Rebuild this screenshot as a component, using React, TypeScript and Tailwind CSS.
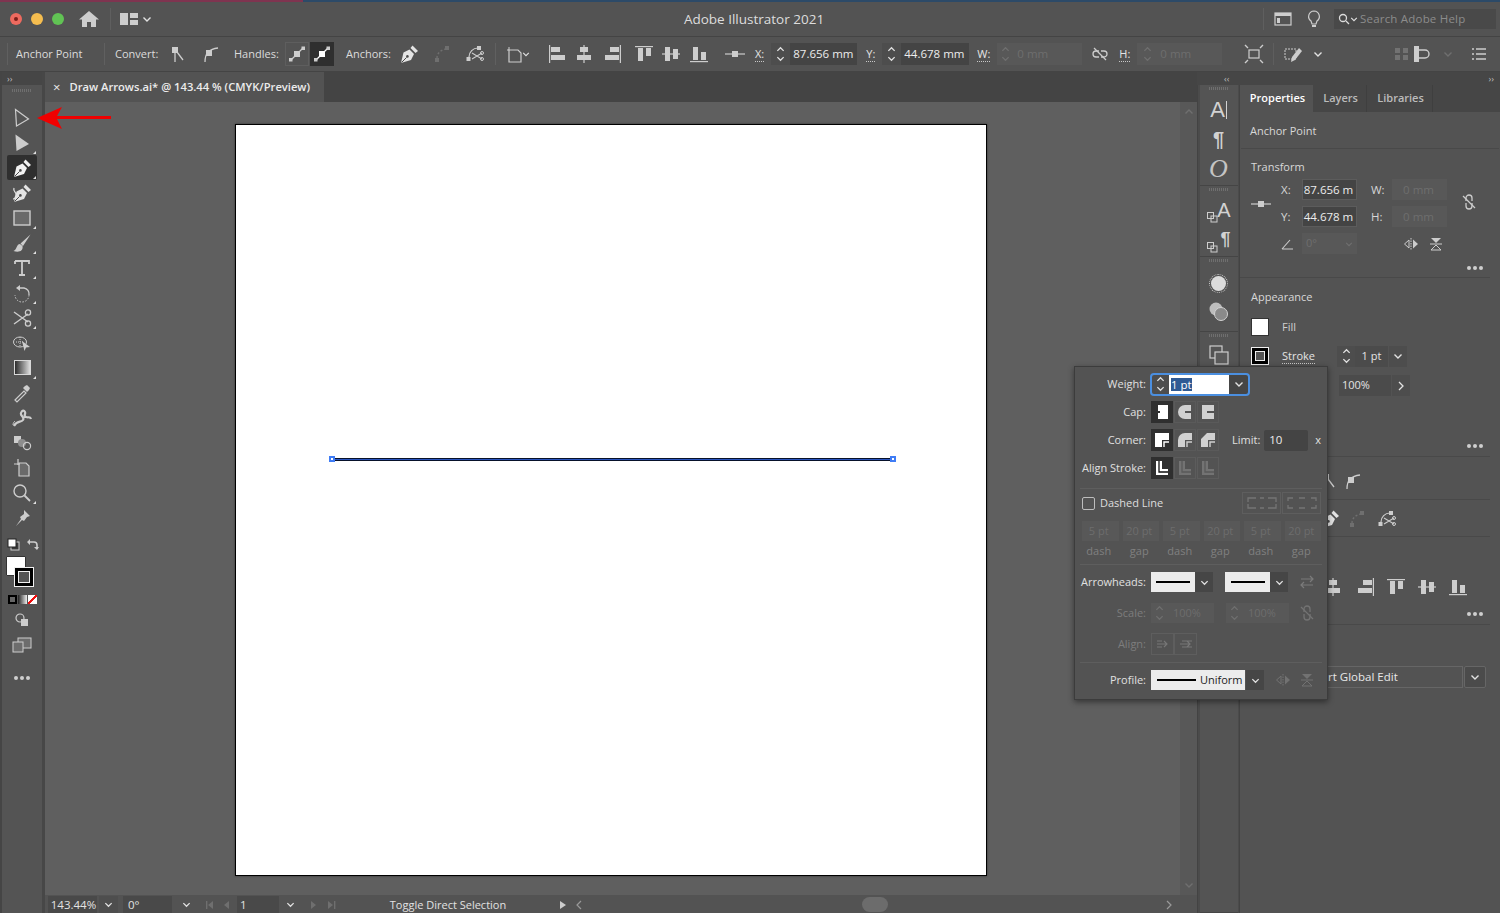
import type { ReactNode } from "react";

const FONT = { fontFamily: '"Open Sans", "Noto Sans", sans-serif' };

function Ico({ w = 20, h = 20, className = "", children }: { w?: number; h?: number; className?: string; children: ReactNode }) {
  return (
    <svg width={w} height={h} viewBox={`0 0 ${w} ${h}`} className={`shrink-0 ${className}`} fill="none">
      {children}
    </svg>
  );
}

const C = "#cdcdcd";

function Chevron({ dim = false, up = false, size = 10 }: { dim?: boolean; up?: boolean; size?: number }) {
  return (
    <svg width={size} height={size} viewBox="0 0 10 10" className="shrink-0" fill="none">
      <path d={up ? "M1.5 6.5 5 3l3.5 3.5" : "M1.5 3.5 5 7l3.5-3.5"} stroke={dim ? "#6f6f6f" : "#e2e2e2"} strokeWidth="1.4" />
    </svg>
  );
}

function Stepper({ dim = false, className = "w-[19px]" }: { dim?: boolean; className?: string }) {
  return (
    <div className={`flex h-full flex-col items-center justify-center bg-[#4d4d4d] ${className}`}>
      <Chevron up dim={dim} size={9} />
      <Chevron dim={dim} size={9} />
    </div>
  );
}

function Dots({ className = "" }: { className?: string }) {
  return (
    <div className={`flex gap-[2px] ${className}`}>
      <span className="h-[4px] w-[4px] rounded-full bg-[#cfcfcf]" />
      <span className="h-[4px] w-[4px] rounded-full bg-[#cfcfcf]" />
      <span className="h-[4px] w-[4px] rounded-full bg-[#cfcfcf]" />
    </div>
  );
}

function Under({ children, className = "" }: { children: ReactNode; className?: string }) {
  return <span className={`border-b border-dotted border-[#c8c8c8] leading-[12px] text-[#e4e4e4] ${className}`}>{children}</span>;
}

/* ---------- align icons ---------- */
function AlignIcon({ kind }: { kind: number }) {
  const f = C;
  const shapes = [
    <g key="0" fill={f}><rect x="1" y="1" width="1.2" height="18" /><rect x="3" y="3" width="9" height="5" /><rect x="3" y="11" width="14" height="5" /></g>,
    <g key="1" fill={f}><rect x="9.4" y="1" width="1.2" height="18" /><rect x="6" y="3" width="8" height="5" /><rect x="3" y="11" width="14" height="5" /></g>,
    <g key="2" fill={f}><rect x="17.8" y="1" width="1.2" height="18" /><rect x="8" y="3" width="9" height="5" /><rect x="3" y="11" width="14" height="5" /></g>,
    <g key="3" fill={f}><rect x="1" y="2" width="18" height="1.2" /><rect x="4" y="4" width="5" height="13" /><rect x="12" y="4" width="5" height="8" /></g>,
    <g key="4" fill={f}><rect x="1" y="9.4" width="18" height="1.2" /><rect x="4" y="3" width="5" height="14" /><rect x="12" y="5" width="5" height="10" /></g>,
    <g key="5" fill={f}><rect x="1" y="17" width="18" height="1.2" /><rect x="4" y="3" width="5" height="13" /><rect x="12" y="8" width="5" height="8" /></g>,
  ];
  return <Ico>{shapes[kind]}</Ico>;
}

function ConvertCorner() {
  return (
    <Ico>
      <rect x="3" y="3" width="6" height="6" fill={C} />
      <path d="M6 9v9M8 8l6 8" stroke={C} strokeWidth="1.3" />
    </Ico>
  );
}

function ConvertSmooth() {
  return (
    <Ico>
      <rect x="5" y="6" width="6" height="6" fill={C} />
      <path d="M4 18c0-8 3-13 13-14" stroke={C} strokeWidth="1.3" />
    </Ico>
  );
}

function HandleIcon({ active = false }: { active?: boolean }) {
  const c = active ? "#fff" : C;
  return (
    <Ico w={18} h={18}>
      <path d="M3 15 15 3" stroke={c} strokeWidth="1.2" />
      <rect x="1" y="13" width="3.5" height="3.5" fill={C} />
      <rect x="13.5" y="1.5" width="3.5" height="3.5" fill={C} />
      <rect x="6" y="6" width="6" height="6" fill={c} />
    </Ico>
  );
}

function PenIcon({ curl = false, fill = "#e4e4e4" }: { curl?: boolean; fill?: string }) {
  return (
    <Ico>
      <path d="M2 19 4.5 8.5 10.5 5.5 15 10l-3 6z" fill={fill} />
      <path d="M11.5 4 13.5 1.5 19 7l-2.5 2z" fill={fill} />
      <path d="m2.5 18.5 5-5" stroke="#4a4a4a" strokeWidth="1" />
      <circle cx="8.4" cy="12.4" r="1.3" fill="#4a4a4a" />
      {curl && <path d="M2 5c-1.5 4 3 3.5 2 7.5-.5 2-2 3.5-3 3.5" stroke={fill} strokeWidth="1.2" />}
    </Ico>
  );
}

function RemoveAnchor() {
  return (
    <Ico>
      <path d="M5 14c0-4 3-8 9-9" stroke="#6f6f6f" strokeWidth="1.4" strokeDasharray="2 2" />
      <rect x="3" y="14" width="4" height="4" fill="#6f6f6f" />
      <rect x="13" y="2" width="4" height="4" fill="#6f6f6f" />
    </Ico>
  );
}

function CutAnchor() {
  return (
    <Ico>
      <path d="M4 13c0-5 4-9 9-9" stroke={C} strokeWidth="1.2" />
      <rect x="1.5" y="13" width="4" height="4" fill={C} />
      <rect x="12" y="2" width="4" height="4" fill={C} />
      <path d="m7 9 10 6M7 15l10-6" stroke={C} strokeWidth="1.1" />
      <circle cx="17" cy="9" r="1.5" stroke={C} />
      <circle cx="17" cy="15" r="1.5" stroke={C} />
    </Ico>
  );
}

function UnlinkIcon({ dim = false, flat = false }: { dim?: boolean; flat?: boolean }) {
  const c = dim ? "#737373" : C;
  return (
    <Ico w={18} h={18} className={flat ? "rotate-90 -scale-x-100" : ""}>
      <path d="M6 8V5a3 3 0 0 1 6 0v3M6 10v3a3 3 0 0 0 6 0v-3" stroke={c} strokeWidth="1.3" />
      <path d="M3 3l12 12" stroke={c} strokeWidth="1.3" />
    </Ico>
  );
}

function FlipH({ dim = false }: { dim?: boolean }) {
  const c = dim ? "#727272" : C;
  return (
    <Ico w={16} h={16}>
      <path d="M6 4 1.5 8 6 12z" stroke={c} />
      <path d="M10 3.500 15 8l-5 4.500z" fill={c} />
      <path d="M8 2v12" stroke={c} strokeDasharray="1.5 1" />
    </Ico>
  );
}

function FlipV({ dim = false }: { dim?: boolean }) {
  const c = dim ? "#727272" : C;
  return (
    <Ico w={16} h={16}>
      <path d="M3 2h10L8 7z" fill={c} />
      <path d="M3 14h10L8 9z" stroke={c} />
      <path d="M2 8h12" stroke={c} />
    </Ico>
  );
}

function Anchor3() {
  return (
    <Ico w={20} h={10}>
      <path d="M0 5h20" stroke={C} strokeWidth="1.2" />
      <rect x="7" y="2" width="6" height="6" fill={C} />
    </Ico>
  );
}

/* ---------- title bar ---------- */
function TitleBar() {
  return (
    <div>
      <div className="h-[2px] bg-[linear-gradient(90deg,#7f3450_303px,#2c4a68_303px)]" />
      <div className="flex h-[34px] items-center bg-[#535353]">
        <span className="ml-[10px] flex h-[12px] w-[12px] items-center justify-center rounded-full bg-[#ee6a5f]">
          <span className="h-[4px] w-[4px] rounded-full bg-[#7a1f1a]" />
        </span>
        <span className="ml-[9px] h-[12px] w-[12px] rounded-full bg-[#f5bd4f]" />
        <span className="ml-[9px] h-[12px] w-[12px] rounded-full bg-[#61c354]" />
        <Ico w={20} h={18} className="ml-[15px]">
          <path d="M10 1 0 9.5h3V17h5v-5h4v5h5V9.5h3z" fill={C} />
        </Ico>
        <span className="ml-[11px] h-[22px] w-px bg-[#5f5f5f]" />
        <Ico w={18} h={14} className="ml-[9px]">
          <rect x="0" y="1" width="8" height="12" fill={C} />
          <rect x="10" y="1" width="8" height="5" fill={C} />
          <rect x="10" y="8" width="8" height="5" fill={C} />
        </Ico>
        <span className="ml-[4px]"><Chevron /></span>
        <div className="ml-[502px] w-[200px] text-center text-[13.5px] text-[#dddddd]">Adobe Illustrator 2021</div>
        <span className="ml-[409px] h-[22px] w-px bg-[#5f5f5f]" />
        <Ico w={18} h={14} className="ml-[10px]">
          <rect x="1" y="1" width="16" height="12" stroke={C} strokeWidth="1.2" />
          <rect x="1" y="1" width="16" height="3" fill={C} />
          <rect x="3" y="6" width="3" height="5" fill={C} />
        </Ico>
        <Ico w={14} h={18} className="ml-[15px]">
          <path d="M7 1a5.5 5.5 0 0 0-3 10l1 3h4l1-3A5.5 5.5 0 0 0 7 1z" stroke={C} strokeWidth="1.2" />
          <rect x="5" y="15" width="4" height="2" fill={C} />
        </Ico>
        <div className="ml-[13px] flex h-[20px] w-[162px] items-center bg-[#494949] pl-[4px]">
          <Ico w={12} h={12}>
            <circle cx="5" cy="5" r="3.5" stroke="#dcdcdc" strokeWidth="1.3" />
            <path d="m8 8 3 3" stroke="#dcdcdc" strokeWidth="1.3" />
          </Ico>
          <Chevron size={8} />
          <span className="ml-[2px] text-[11.5px] tracking-[0.2px] text-[#8c8c8c]">Search Adobe Help</span>
        </div>
      </div>
    </div>
  );
}

/* ---------- control bar ---------- */
function Field({ value, dim = false, w, stepW = "w-[19px]" }: { value: string; dim?: boolean; w: string; stepW?: string }) {
  return (
    <div className="flex h-[22px] items-center">
      <Stepper dim={dim} className={dim ? `${stepW} !bg-[#585858]` : stepW} />
      <div className={`flex h-full items-center pl-[3px] text-[11.5px] ${w} ${dim ? "bg-[#585858] text-[#6e6e6e]" : "bg-[#444444] text-[#ececec]"}`}>
        {value}
      </div>
    </div>
  );
}

function ControlBar() {
  return (
    <div className="flex h-[36px] items-center border-y border-[#444444] bg-[#535353] text-[11px] text-[#dcdcdc]">
      <span className="ml-[7px] h-[22px] w-px bg-[#606060]" />
      <span className="ml-[8px] w-[66px] whitespace-nowrap">Anchor Point</span>
      <span className="ml-[22px] h-[22px] w-px bg-[#606060]" />
      <span className="ml-[10px] w-[44px]">Convert:</span>
      <span className="ml-[10px]"><ConvertCorner /></span>
      <span className="ml-[12px]"><ConvertSmooth /></span>
      <span className="ml-[13px] w-[44px]">Handles:</span>
      <div className="ml-[7px] flex h-[24px] w-[24px] items-center justify-center border border-[#5e5e5e]"><HandleIcon /></div>
      <div className="ml-px flex h-[24px] w-[24px] items-center justify-center bg-[#2f2f2f]"><HandleIcon active /></div>
      <span className="ml-[12px] w-[45px]">Anchors:</span>
      <span className="ml-[8px]"><PenIcon /></span>
      <span className="ml-[13px]"><RemoveAnchor /></span>
      <span className="ml-[13px]"><CutAnchor /></span>
      <span className="ml-[10px] h-[22px] w-px bg-[#606060]" />
      <Ico w={16} h={18} className="ml-[10px]">
        <path d="M3 5h9l3 3v9H3z" stroke={C} strokeWidth="1.2" />
        <path d="M1 5h2M3 2v3" stroke={C} />
      </Ico>
      <Chevron size={8} />
      <span className="ml-[18px]"><AlignIcon kind={0} /></span>
      <span className="ml-[6px]"><AlignIcon kind={1} /></span>
      <span className="ml-[8px]"><AlignIcon kind={2} /></span>
      <span className="ml-[12px]"><AlignIcon kind={3} /></span>
      <span className="ml-[7px]"><AlignIcon kind={4} /></span>
      <span className="ml-[8px]"><AlignIcon kind={5} /></span>
      <span className="ml-[16px]"><Anchor3 /></span>
      <span className="ml-[10px]"><Under>X:</Under></span>
      <span className="ml-[7px]"><Field value="87.656 mm" w="w-[67px]" /></span>
      <span className="ml-[9px]"><Under>Y:</Under></span>
      <span className="ml-[7px]"><Field value="44.678 mm" w="w-[68px]" /></span>
      <span className="ml-[8px]"><Under>W:</Under></span>
      <span className="ml-[7px]"><Field value="0 mm" dim w="w-[68px]" stepW="w-[17px]" /></span>
      <span className="ml-[9px]"><UnlinkIcon flat /></span>
      <span className="ml-[10px]"><Under>H:</Under></span>
      <span className="ml-[7px]"><Field value="0 mm" dim w="w-[65px]" stepW="w-[20px]" /></span>
      <Ico w={20} h={20} className="ml-[22px]">
        <rect x="5" y="6" width="10" height="8" stroke={C} strokeWidth="1.2" />
        <path d="M1 1l3 3M19 1l-3 3M1 19l3-3M19 19l-3-3" stroke={C} strokeWidth="1.4" />
      </Ico>
      <span className="ml-[9px] h-[22px] w-px bg-[#5e5e5e]" />
      <Ico w={20} h={20} className="ml-[10px]">
        <rect x="1" y="5" width="11" height="10" stroke={C} strokeDasharray="2 1" />
        <path d="m7 18 1-5 7-9 3 3-7 9z" fill={C} />
      </Ico>
      <span className="ml-[9px]"><Chevron /></span>
      <Ico w={16} h={14} className="ml-[71px]">
        <rect x="1" y="1" width="5" height="5" fill="#727272" />
        <rect x="9" y="1" width="5" height="5" fill="#727272" />
        <rect x="1" y="8" width="5" height="5" fill="#727272" />
        <rect x="9" y="8" width="5" height="5" fill="#727272" />
      </Ico>
      <Ico w={16} h={20} className="ml-[4px]">
        <rect x="0" y="2" width="5" height="16" fill={C} />
        <path d="M5 6h6a4 4 0 0 1 0 8H5" stroke={C} strokeWidth="1.4" />
      </Ico>
      <span className="ml-[13px]"><Chevron dim /></span>
      <Ico w={14} h={14} className="ml-[19px]">
        <path d="M0 2h2M4 2h10M0 7h2M4 7h10M0 12h2M4 12h10" stroke={C} strokeWidth="1.4" />
      </Ico>
    </div>
  );
}

/* ---------- tools ---------- */
function Tool({ children, corner = true, active = false }: { children: ReactNode; corner?: boolean; active?: boolean }) {
  return (
    <div className={`relative flex h-[25px] w-[30px] items-center justify-center ${active ? "rounded-[2px] bg-[#2f2f2f]" : ""}`}>
      {children}
      {corner && <span className="absolute bottom-[1px] right-[1px] h-0 w-0 border-b-[3px] border-l-[3px] border-b-[#e0e0e0] border-l-transparent" />}
    </div>
  );
}

function Grip({ className = "" }: { className?: string }) {
  return <div className={`h-[3px] w-[20px] bg-[repeating-linear-gradient(90deg,#6f6f6f_0,#6f6f6f_1px,transparent_1px,transparent_2px)] ${className}`} />;
}

function ToolBar() {
  return (
    <div className="flex w-[42px] shrink-0 flex-col items-center border-l-2 border-[#454545] bg-[#545454]">
      <div className="flex h-[13px] w-full items-center bg-[#464646] pl-[5px] text-[9px] leading-none text-[#bdbdbd]">››</div>
      <Grip className="mt-[4px]" />
      <div className="mt-[13px] flex flex-col items-center">
        <Tool corner={false}>
          <Ico><path d="M3.5 1.500 4.500 18 16.500 11z" stroke={C} strokeWidth="1.2" /></Ico>
        </Tool>
        <Tool>
          <Ico><path d="M3.5 1.500 4.500 18 17 11z" fill={C} /></Ico>
        </Tool>
        <Tool active><PenIcon fill="#f2f2f2" /></Tool>
        <Tool corner={false}><PenIcon curl /></Tool>
        <Tool>
          <Ico><rect x="2" y="3" width="16" height="14" fill="#6a6a6a" stroke={C} strokeWidth="1.4" /></Ico>
        </Tool>
        <Tool>
          <Ico><path d="M18.5 1.500 8.500 10.500l2.500 2.500zM8 11c-4 .5-2.500 5-6.500 7 5 1.500 10 .5 9-5z" fill={C} /></Ico>
        </Tool>
        <Tool>
          <Ico><path d="M3 3h14v3M3 3v3M10 3v14M7 17h6" stroke={C} strokeWidth="1.8" /></Ico>
        </Tool>
        <Tool>
          <Ico>
            <path d="M6 5h6a6 6 0 0 1 5 7" stroke={C} strokeWidth="1.3" />
            <path d="M17 12a7 7 0 0 1-14 0" stroke={C} strokeDasharray="1.5 1.5" />
            <path d="M8 2 4 5l4 3z" fill={C} />
          </Ico>
        </Tool>
        <Tool>
          <Ico>
            <path d="m2 4 14 10M2 16 16 6" stroke={C} strokeWidth="1.4" />
            <circle cx="16" cy="4.5" r="2.6" stroke={C} strokeWidth="1.3" />
            <circle cx="16" cy="15.5" r="2.6" stroke={C} strokeWidth="1.3" />
          </Ico>
        </Tool>
        <Tool corner={false}>
          <Ico>
            <ellipse cx="8" cy="9" rx="6.5" ry="5" stroke={C} />
            <path d="M4 9h8M8 4v10" stroke={C} strokeDasharray="1 1" />
            <path d="m10 8 8 6-4 .5-1.5 3.5z" fill={C} />
          </Ico>
        </Tool>
        <Tool>
          <div className="h-[15px] w-[17px] border border-[#d8d8d8] bg-[linear-gradient(90deg,#2c2c2c,#dedede)]" />
        </Tool>
        <Tool corner={false}>
          <Ico>
            <path d="m3 17 9-9 2 2-9 9z" stroke={C} strokeWidth="1.2" />
            <path d="m11 5 2-2 2-1 3 3-1 2-2 2z" fill={C} />
          </Ico>
        </Tool>
        <Tool corner={false}>
          <Ico>
            <path d="M2 18c3-6 7-3 9-6s-3-4-2-7 3-3 4-1-2 4 1 5 4-1 5 2" stroke={C} strokeWidth="2.2" />
            <path d="M1 17c0-2 1-3 2-4" stroke={C} />
          </Ico>
        </Tool>
        <Tool corner={false}>
          <Ico>
            <rect x="2" y="3" width="7" height="7" fill={C} />
            <circle cx="10" cy="10" r="4" fill="#8d8d8d" />
            <circle cx="15" cy="13" r="3.6" stroke={C} strokeWidth="1.2" />
          </Ico>
        </Tool>
        <Tool corner={false}>
          <Ico>
            <path d="M7 5h7l3 3v10H7z" fill="#6a6a6a" stroke={C} strokeWidth="1.2" />
            <path d="M2 6h6M6 1v6" stroke={C} strokeWidth="1.2" />
          </Ico>
        </Tool>
        <Tool>
          <Ico>
            <circle cx="8" cy="8" r="6" stroke={C} strokeWidth="1.4" />
            <path d="m12.5 12.5 5.5 5.5" stroke={C} strokeWidth="1.8" />
          </Ico>
        </Tool>
        <Tool corner={false}>
          <Ico><path d="m12 2 6 6-3 1-3 4-2-1-6 6 5-7-1-2 4-3z" fill={C} /></Ico>
        </Tool>
      </div>
      <div className="mt-[7px] flex h-[14px] w-[34px] items-center justify-between pl-[2px]">
        <Ico w={13} h={13}>
          <rect x="4" y="4" width="8" height="8" fill="#3a3a3a" stroke={C} />
          <rect x="1" y="1" width="8" height="8" fill="#fff" stroke="#222" />
        </Ico>
        <Ico w={13} h={13}>
          <path d="M2 4h6a3 3 0 0 1 3 3v4" stroke={C} strokeWidth="1.6" />
          <path d="M4 1 1 4l3 3zM8 9l3 3 2-3z" fill={C} />
        </Ico>
      </div>
      <div className="relative mt-[5px] h-[31px] w-[32px]">
        <div className="h-[20px] w-[20px] rounded-[1px] border border-[#333] bg-white" />
        <div className="absolute bottom-0 right-[4px] flex h-[20px] w-[20px] items-center justify-center border border-[#f0f0f0] bg-black">
          <div className="flex h-[12px] w-[12px] items-center justify-center border border-[#f0f0f0] bg-[#555]" />
        </div>
      </div>
      <div className="mt-[7px] flex h-[10px] items-center gap-px">
        <div className="flex h-[9px] w-[9px] items-center justify-center bg-black"><div className="h-[5px] w-[5px] bg-[#666]" /></div>
        <div className="h-[9px] w-[9px] bg-[linear-gradient(90deg,#222,#eee)]" />
        <div className="h-[9px] w-[9px] bg-[linear-gradient(135deg,#fff_40%,#f01010_40%,#f01010_60%,#fff_60%)]" />
      </div>
      <Ico w={14} h={14} className="mt-[9px]">
        <circle cx="5" cy="5" r="4" stroke={C} strokeWidth="1.2" />
        <rect x="6" y="6" width="7" height="7" fill={C} />
      </Ico>
      <Ico w={20} h={16} className="mt-[10px]">
        <rect x="6" y="1" width="13" height="10" fill="#6d6d6d" stroke={C} />
        <rect x="1" y="5" width="10" height="10" fill="#6d6d6d" stroke={C} />
      </Ico>
      <Dots className="mt-[23px]" />
    </div>
  );
}

/* ---------- canvas ---------- */
function Handle({ className }: { className: string }) {
  return <span className={`absolute top-[331px] h-[6px] w-[6px] border-2 border-[#3f7cf5] bg-white ${className}`} />;
}

function Canvas() {
  return (
    <div className="flex h-[793px] flex-1 bg-[#5f5f5f]">
      <div className="flex-1 pl-[190px] pt-[22px]">
        <div className="relative h-[752px] w-[752px] border border-black bg-white shadow-[0_0_2px_#333]">
          {/* the anchor path sits freely on the artboard */}
          <div className="absolute left-[95px] top-[333px] flex h-[3px] w-[563px] items-center bg-[#08122a]">
            <div className="h-px w-full bg-[#2a55c0]" />
          </div>
          <Handle className="left-[93px]" />
          <Handle className="left-[654px]" />
        </div>
      </div>
      <div className="flex w-[17px] shrink-0 flex-col items-center justify-between bg-[#585858] py-[5px]">
        <Chevron up dim />
        <Chevron dim />
      </div>
    </div>
  );
}

function NavArrows({ right = false }: { right?: boolean }) {
  const fill = "#6f6f6f";
  return right ? (
    <Ico w={26} h={10}>
      <path d="M1 1l5 4-5 4z" fill={fill} />
      <path d="M18 1l5 4-5 4zM24 1h1.4v8H24z" fill={fill} />
    </Ico>
  ) : (
    <Ico w={26} h={10}>
      <path d="M1 1h1.4v8H1zM8 1 3 5l5 4z" fill={fill} />
      <path d="M24 1l-5 4 5 4z" fill={fill} />
    </Ico>
  );
}

function StatusBar() {
  return (
    <div className="flex h-[18px] items-center bg-[#535353] pt-[1px] text-[11.5px] text-[#e2e2e2]">
      <div className="ml-[3px] flex h-full w-[49px] items-center justify-center bg-[#494949] pl-[2px] pt-[1px]">143.44%</div>
      <div className="ml-[2px] flex h-full w-[19px] items-center justify-center bg-[#4e4e4e]"><Chevron size={9} /></div>
      <div className="ml-[5px] flex h-full w-[49px] items-center bg-[#494949] pl-[5px] pt-[1px]">0°</div>
      <div className="ml-[6px] flex h-full w-[16px] items-center justify-center"><Chevron size={9} /></div>
      <div className="ml-[11px]"><NavArrows /></div>
      <div className="ml-[6px] flex h-full w-[42px] items-center bg-[#494949] pl-[3px] pt-[1px]">1</div>
      <div className="ml-[3px] flex h-full w-[16px] items-center justify-center"><Chevron size={9} /></div>
      <div className="ml-[12px]"><NavArrows right /></div>
      <div className="ml-[12px] w-[200px] whitespace-nowrap pt-[1px] text-center text-[11px]">Toggle Direct Selection</div>
      <Ico w={10} h={10} className="ml-[10px]"><path d="M2 1l6 4-6 4z" fill={C} /></Ico>
      <Ico w={10} h={10} className="ml-[6px]"><path d="M7 1 3 5l4 4" stroke="#9a9a9a" strokeWidth="1.2" /></Ico>
      <div className="flex h-full flex-1 items-center pl-[278px] pr-[6px]">
        <span className="h-[15px] w-[26px] rounded-full bg-[#6c6c6c]" />
        <span className="ml-auto">
          <Ico w={10} h={10}><path d="M3 1l4 4-4 4" stroke="#9a9a9a" strokeWidth="1.2" /></Ico>
        </span>
      </div>
      <div className="w-[17px]" />
    </div>
  );
}

/* ---------- right dock ---------- */
function DockGroup({ children, className = "" }: { children: ReactNode; className?: string }) {
  return (
    <div className={`flex w-[38px] flex-col items-center border-b border-[#454545] bg-[#545454] pt-[2px] ${className}`}>
      <Grip />
      {children}
    </div>
  );
}

function IconDock() {
  return (
    <div className="flex w-[43px] shrink-0 flex-col items-center border-x border-[#434343] bg-[#4b4b4b]">
      <DockGroup className="h-[101px]">
        <div className="mt-[5px] flex h-[30px] items-center text-[22px] leading-none text-[#d2d2d2]" style={{ fontFamily: '"Liberation Sans", sans-serif' }}>A<span className="ml-px inline-block h-[18px] w-px bg-[#d2d2d2]" /></div>
        <div className="-mt-px flex h-[30px] items-center text-[20px] font-bold leading-none text-[#d2d2d2]" style={{ fontFamily: '"Liberation Sans", sans-serif' }}>¶</div>
        <div className="flex h-[30px] items-center text-[26px] italic leading-none text-[#c4c4c4]" style={{ fontFamily: '"Liberation Serif", serif' }}>O</div>
      </DockGroup>
      <DockGroup className="h-[71px]">
        <div className="relative mt-[6px] flex h-[30px] w-[24px] items-start justify-end text-[20px] leading-[26px] text-[#d2d2d2]" style={{ fontFamily: '"Liberation Sans", sans-serif' }}>
          A
          <Ico w={11} h={11} className="absolute bottom-[3px] left-0">
            <rect x="0.5" y="0.5" width="6" height="6" stroke={C} />
            <rect x="4" y="4" width="6" height="6" stroke={C} />
          </Ico>
        </div>
        <div className="relative mt-px flex h-[30px] w-[24px] items-start justify-end text-[18px] font-bold leading-[24px] text-[#d2d2d2]" style={{ fontFamily: '"Liberation Sans", sans-serif' }}>
          ¶
          <Ico w={11} h={11} className="absolute bottom-[3px] left-0">
            <rect x="0.5" y="0.5" width="6" height="6" stroke={C} />
            <rect x="4" y="4" width="6" height="6" stroke={C} />
          </Ico>
        </div>
      </DockGroup>
      <DockGroup className="h-[75px]">
        <div className="mt-[6px] flex h-[30px] items-center">
          <span className="h-[15px] w-[15px] rounded-full bg-[#dcdcdc] outline-1 outline-offset-1 outline-dotted outline-[#c8c8c8]" />
        </div>
        <Ico w={22} h={22} className="mt-[3px]">
          <circle cx="8" cy="8" r="6.5" fill="#bdbdbd" />
          <circle cx="13" cy="13" r="6.5" fill="#8a8a8a" stroke="#d2d2d2" />
        </Ico>
      </DockGroup>
      <DockGroup className="flex-1">
        <Ico w={22} h={22} className="mt-[7px]">
          <rect x="2" y="2" width="12" height="12" stroke={C} strokeWidth="1.2" />
          <rect x="7" y="8" width="13" height="12" fill="#5a5a5a" stroke={C} strokeWidth="1.2" />
        </Ico>
      </DockGroup>
    </div>
  );
}

/* ---------- properties panel ---------- */
function PanelField({ label, value, dim = false }: { label: string; value: string; dim?: boolean }) {
  return (
    <div className="flex items-center">
      <span className="w-[18px] text-[11.5px] text-[#d6d6d6]">{label}</span>
      <span className={`ml-[3px] flex h-[21px] w-[55px] items-center justify-center overflow-hidden whitespace-nowrap pr-[2px] text-[11.5px] ${dim ? "bg-[#585858] text-[#6e6e6e]" : "border border-[#5c5c5c] bg-[#444444] text-[#ececec]"}`}>{value}</span>
    </div>
  );
}

function PropertiesPanel() {
  return (
    <div className="flex min-w-0 flex-1 flex-col bg-[#535353] text-[11px] text-[#d8d8d8]">
      <div className="flex h-[27px] bg-[#464646] text-[11px] font-semibold">
        <div className="flex w-[73px] items-center justify-center bg-[#535353] pl-[2px] text-white">Properties</div>
        <div className="flex w-[54px] items-center justify-center border-r border-[#3f3f3f] pl-[2px] text-[#bcbcbc]">Layers</div>
        <div className="flex w-[66px] items-center justify-center border-r border-[#3f3f3f] pl-[2px] text-[#bcbcbc]">Libraries</div>
      </div>
      <div className="mx-[1px] h-[37px] border-b border-[#494949] pl-[9px] pr-[10px] pt-[11px] leading-[16px]">Anchor Point</div>
      <section className="relative mr-[10px] h-[129px] border-b border-[#494949] pl-[11px]">
        <div className="pt-[10px] leading-[16px]">Transform</div>
        <div className="mt-[4px] flex">
          <div className="mr-[10px] mt-[20px]"><Anchor3 /></div>
          <div className="flex flex-col gap-[6px]">
            <PanelField label="X:" value="87.656 m" />
            <PanelField label="Y:" value="44.678 m" />
            <div className="flex items-center">
              <Ico w={17} h={12}><path d="M1 11h11M1 11l8-9" stroke={C} strokeWidth="1.1" /></Ico>
              <span className="ml-[4px] flex h-[21px] w-[55px] items-center justify-between bg-[#585858] px-[4px] text-[#6e6e6e]">0°<Chevron dim size={8} /></span>
            </div>
          </div>
          <div className="ml-[14px] flex flex-col gap-[6px]">
            <PanelField label="W:" value="0 mm" dim />
            <PanelField label="H:" value="0 mm" dim />
            <div className="ml-[32px] flex h-[21px] items-center gap-[9px]"><FlipH /><FlipV /></div>
          </div>
          <div className="ml-[13px] mt-[14px]"><UnlinkIcon /></div>
        </div>
        <Dots className="absolute bottom-[7px] right-[7px]" />
      </section>
      <section className="relative mr-[10px] h-[179px] border-b border-[#494949] pl-[11px]">
        <div className="pt-[11px] leading-[16px]">Appearance</div>
        <div className="mt-[12px] flex h-[20px] items-center">
          <span className="h-[18px] w-[18px] border border-[#333] bg-white" />
          <span className="ml-[13px] text-[#cfcfcf]">Fill</span>
        </div>
        <div className="mt-[9px] flex h-[20px] items-center">
          <span className="flex h-[18px] w-[18px] items-center justify-center border border-[#efefef] bg-black">
            <span className="h-[10px] w-[10px] border border-[#efefef] bg-[#555]" />
          </span>
          <span className="ml-[13px] w-[44px]"><Under>Stroke</Under></span>
          <div className="ml-[11px] flex h-[21px] items-center">
            <Stepper className="w-[18px]" />
            <span className="flex h-full w-[33px] items-center justify-center bg-[#4b4b4b] text-[#e4e4e4]">1 pt</span>
            <span className="ml-px flex h-full w-[18px] items-center justify-center bg-[#4d4d4d]"><Chevron /></span>
          </div>
        </div>
        <div className="ml-[88px] mt-[9px] flex h-[21px] items-center">
          <span className="flex h-full w-[52px] items-center bg-[#4b4b4b] pl-[3px] text-[#e4e4e4]">100%</span>
          <span className="ml-px flex h-full w-[18px] items-center justify-center bg-[#4d4d4d]">
            <Ico w={8} h={10}><path d="m2 1 4 4-4 4" stroke="#e2e2e2" strokeWidth="1.3" /></Ico>
          </span>
        </div>
        <Dots className="absolute bottom-[8px] right-[7px]" />
      </section>
      <div className="mr-[10px] flex h-[43px] items-center border-b border-[#494949] pl-[80px] pt-[5px]">
        <ConvertCorner />
        <span className="ml-[3px]"><ConvertSmooth /></span>
      </div>
      <div className="mr-[10px] flex h-[37px] items-center border-b border-[#494949] pl-[80px] pt-[2px]">
        <PenIcon />
        <span className="ml-[7px]"><RemoveAnchor /></span>
        <span className="ml-[10px]"><CutAnchor /></span>
      </div>
      <section className="relative mr-[10px] h-[88px] border-b border-[#494949]">
        <div className="flex pl-[83px] pt-[40px]">
          <AlignIcon kind={1} />
          <span className="ml-[12px]"><AlignIcon kind={2} /></span>
          <span className="ml-[11px]"><AlignIcon kind={3} /></span>
          <span className="ml-[11px]"><AlignIcon kind={4} /></span>
          <span className="ml-[11px]"><AlignIcon kind={5} /></span>
        </div>
        <Dots className="absolute bottom-[8px] right-[7px]" />
      </section>
      <div className="ml-[10px] mt-[41px] flex h-[22px] items-center">
        <div className="flex h-full w-[213px] items-center justify-center border border-[#666] pr-[4px] text-[11.5px] text-[#e8e8e8]">Start Global Edit</div>
        <div className="ml-[1px] flex h-full w-[22px] items-center justify-center rounded-[2px] border border-[#666] bg-[#4b4b4b]"><Chevron /></div>
      </div>
    </div>
  );
}

function RightDock() {
  return (
    <div className="flex w-[303px] shrink-0 flex-col">
      <div className="flex h-[13px] shrink-0 items-center justify-between bg-[#464646] pl-[27px] pr-[6px] text-[9px] leading-none text-[#bdbdbd]">
        <span>‹‹</span>
        <span>››</span>
      </div>
      <div className="flex flex-1">
        <IconDock />
        <PropertiesPanel />
      </div>
    </div>
  );
}

/* ---------- stroke popup ---------- */
function PopRow({ label, children, className = "h-[28px]", dim = false }: { label: string; children?: ReactNode; className?: string; dim?: boolean }) {
  return (
    <div className={`flex items-center ${className}`}>
      <span className={`w-[71px] whitespace-nowrap text-right ${dim ? "text-[#7d7d7d]" : "text-[#e0e0e0]"}`}>{label}</span>
      <div className="ml-[5px] flex h-full items-center">{children}</div>
    </div>
  );
}

function SquareBtn({ active = false, dim = false, children }: { active?: boolean; dim?: boolean; children: ReactNode }) {
  return (
    <div className={`mr-px flex h-[22px] w-[22px] items-center justify-center ${active ? "bg-[#2f2f2f]" : dim ? "border border-[#5c5c5c]" : "border border-[#5a5a5a]"}`}>
      {children}
    </div>
  );
}

function CapGlyph({ kind, c }: { kind: number; c: string }) {
  return (
    <Ico w={16} h={16}>
      {kind === 0 && <path d="M4 1h10v14H4V9h2V7H4z" fill={c} />}
      {kind === 1 && <path d="M14 1H8a7 7 0 0 0 0 14h6V9H8V7h6z" fill={c} />}
      {kind === 2 && <path d="M2 1h12v14H2zm5 6v2h7V7z" fill={c} fillRule="evenodd" />}
    </Ico>
  );
}

function CornerGlyph({ kind, c }: { kind: number; c: string }) {
  const d = ["M1 15V1h14v7H8v7z", "M1 15V8a7 7 0 0 1 7-7h7v7H8v7z", "M1 15V7l6-6h8v7H8v7z"][kind];
  return (
    <Ico w={16} h={16}>
      <path d={d} fill={c} />
      <path d="M15 10h-5v5" stroke={c} strokeWidth="1.4" />
    </Ico>
  );
}

function AlignStrokeGlyph({ c, dim = false }: { c: string; dim?: boolean }) {
  return (
    <Ico w={16} h={16}>
      <path d="M2 1h6v8h6v6H2z" fill={c} />
      <path d="M5 1v11h9" stroke={dim ? "#5a5a5a" : "#111"} strokeWidth="1.3" />
    </Ico>
  );
}

function ArrowSelect({ w }: { w: string }) {
  return (
    <div className="flex h-[20px] items-center">
      <div className={`flex h-full items-center justify-center bg-[#ececec] ${w}`}>
        <span className="h-[2px] w-[34px] bg-black" />
      </div>
      <div className="flex h-full w-[18px] items-center justify-center bg-[#464646]"><Chevron size={9} /></div>
    </div>
  );
}

function DashBox({ value, label }: { value: string; label: string }) {
  return (
    <div className="flex flex-col items-center">
      <div className="flex h-[20px] w-full items-center justify-center bg-[#585858] pr-[3px] text-[#6d6d6d]">{value}</div>
      <div className="mt-[1px] pr-[3px] leading-[18px] text-[#808080]">{label}</div>
    </div>
  );
}

function DashPreview({ offset = false }: { offset?: boolean }) {
  return (
    <div className="flex h-[22px] w-[39px] items-center justify-center border border-[#5e5e5e]">
      <Ico w={30} h={12}>
        <path d={offset ? "M1 4V1h5M12 1h6M24 1h5v3M1 8v3h5M12 11h6M24 11h5V8" : "M1 5V1h8M13 1h4M21 1h8v4M1 7v4h8M13 11h4M21 11h8V7"} stroke="#757575" strokeWidth="1.3" />
      </Ico>
    </div>
  );
}

function StrokePopup() {
  return (
    <div className="absolute left-[1074px] top-[366px] h-[334px] w-[254px] border border-[#3c3c3c] bg-[#535353] pt-[3px] text-[11px] shadow-[0_2px_6px_rgba(0,0,0,0.45)]">
      <PopRow label="Weight:">
        <div className="ml-px flex h-[19px] w-[96px] items-center rounded-[2px] outline-2 outline-[#4b8fe0]">
          <Stepper className="w-[17px]" />
          <div className="flex h-full w-[60px] items-center bg-white pl-[2px] text-[11.5px]">
            <span className="bg-[#2f5a94] leading-[13px] text-white">1 pt</span>
          </div>
          <div className="flex h-full flex-1 items-center justify-center bg-[#464646]"><Chevron /></div>
        </div>
      </PopRow>
      <PopRow label="Cap:">
        <SquareBtn active><CapGlyph kind={0} c="#fff" /></SquareBtn>
        <SquareBtn><CapGlyph kind={1} c="#d0d0d0" /></SquareBtn>
        <SquareBtn><CapGlyph kind={2} c="#d0d0d0" /></SquareBtn>
      </PopRow>
      <PopRow label="Corner:">
        <SquareBtn active><CornerGlyph kind={0} c="#fff" /></SquareBtn>
        <SquareBtn><CornerGlyph kind={1} c="#d0d0d0" /></SquareBtn>
        <SquareBtn><CornerGlyph kind={2} c="#d0d0d0" /></SquareBtn>
        <span className="ml-[12px] text-[#e0e0e0]">Limit:</span>
        <span className="ml-[4px] flex h-[21px] w-[44px] items-center rounded-[2px] bg-[#444444] pl-[5px] text-[11.5px] text-[#ececec]">10</span>
        <span className="ml-[7px] text-[#e0e0e0]">x</span>
      </PopRow>
      <PopRow label="Align Stroke:">
        <SquareBtn active><AlignStrokeGlyph c="#fff" /></SquareBtn>
        <SquareBtn dim><AlignStrokeGlyph c="#737373" dim /></SquareBtn>
        <SquareBtn dim><AlignStrokeGlyph c="#737373" dim /></SquareBtn>
      </PopRow>
      <div className="mx-[5px] mt-[6px] h-px bg-[#5e5e5e]" />
      <div className="mt-[3px] flex h-[22px] items-center pl-[7px] pr-[6px]">
        <span className="h-[13px] w-[13px] rounded-[2px] border border-[#bdbdbd]" />
        <span className="ml-[5px] font-medium text-[#dedede]">Dashed Line</span>
        <div className="ml-auto flex gap-px">
          <DashPreview />
          <DashPreview offset />
        </div>
      </div>
      <div className="mt-[7px] grid grid-cols-6 gap-x-[4px] pl-[7px] pr-[6px]">
        {[["5 pt", "dash"], ["20 pt", "gap"], ["5 pt", "dash"], ["20 pt", "gap"], ["5 pt", "dash"], ["20 pt", "gap"]].map(([v, l], i) => (
          <DashBox key={i} value={v} label={l} />
        ))}
      </div>
      <div className="mx-[5px] mt-[4px] h-px bg-[#5e5e5e]" />
      <PopRow label="Arrowheads:" className="mt-[5px] h-[24px]">
        <ArrowSelect w="w-[44px]" />
        <span className="ml-[12px]"><ArrowSelect w="w-[45px]" /></span>
        <Ico w={16} h={14} className="ml-[11px]">
          <path d="M2 4h12M11 1l3 3-3 3M14 10H2M5 7l-3 3 3 3" stroke="#7b7b7b" strokeWidth="1.2" />
        </Ico>
      </PopRow>
      <PopRow label="Scale:" dim className="mt-[7px] h-[24px]">
        <div className="flex h-[20px] w-[63px]">
          <Stepper dim className="w-[17px] !bg-[#585858]" />
          <span className="flex flex-1 items-center bg-[#585858] pl-[5px] text-[#6d6d6d]">100%</span>
        </div>
        <div className="ml-[12px] flex h-[20px] w-[63px]">
          <Stepper dim className="w-[17px] !bg-[#585858]" />
          <span className="flex flex-1 items-center bg-[#585858] pl-[5px] text-[#6d6d6d]">100%</span>
        </div>
        <span className="ml-[9px]"><UnlinkIcon dim /></span>
      </PopRow>
      <PopRow label="Align:" dim className="mt-[7px] h-[24px]">
        {[0, 1].map((k) => (
          <div key={k} className="flex h-[22px] w-[23px] items-center justify-center border border-[#5e5e5e]">
            <Ico w={14} h={12}><path d={k === 0 ? "M1 3h5M1 9h5M1 6h10M8 3l3 3-3 3" : "M3 3h10M3 9h10M1 6h10M8 3l3 3-3 3"} stroke="#787878" strokeWidth="1.1" /></Ico>
          </div>
        ))}
      </PopRow>
      <div className="mx-[5px] mt-[6px] h-px bg-[#5e5e5e]" />
      <PopRow label="Profile:" className="mt-[5px] h-[24px]">
        <div className="flex h-[20px] w-[94px] items-center bg-[#ececec] pl-[6px] text-black">
          <span className="h-[2px] w-[39px] bg-black" />
          <span className="ml-[4px] text-[11px] font-medium text-[#222]">Uniform</span>
        </div>
        <div className="ml-px flex h-[20px] w-[18px] items-center justify-center bg-[#464646]"><Chevron size={9} /></div>
        <span className="ml-[11px]"><FlipH dim /></span>
        <span className="ml-[8px]"><FlipV dim /></span>
      </PopRow>
    </div>
  );
}

export default function App() {
  return (
    <div className="relative h-[913px] w-[1500px] overflow-hidden bg-[#535353]" style={FONT}>
      <TitleBar />
      <ControlBar />
      <div className="flex h-[841px]">
        <ToolBar />
        <div className="w-[3px] shrink-0 bg-[#474747]" />
        <div className="flex min-w-0 flex-1 flex-col">
          <div className="flex h-[30px] bg-[#444444]">
            <div className="flex w-[279px] items-center bg-[#535353] pl-[8px] text-[11.2px] font-semibold text-[#ececec]">
              <span className="mr-[9px] text-[13px] font-normal leading-none">×</span>
              <span className="whitespace-nowrap">Draw Arrows.ai* @ 143.44 % (CMYK/Preview)</span>
            </div>
          </div>
          <Canvas />
          <StatusBar />
        </div>
        <RightDock />
      </div>
      <StrokePopup />
      {/* annotation arrow over the toolbar */}
      <svg className="absolute left-[36px] top-[105px]" width="76" height="26" viewBox="0 0 76 26">
        <path d="M1 13 26 2 21 11h54v3H21l5 10z" fill="#f00000" />
      </svg>
    </div>
  );
}
